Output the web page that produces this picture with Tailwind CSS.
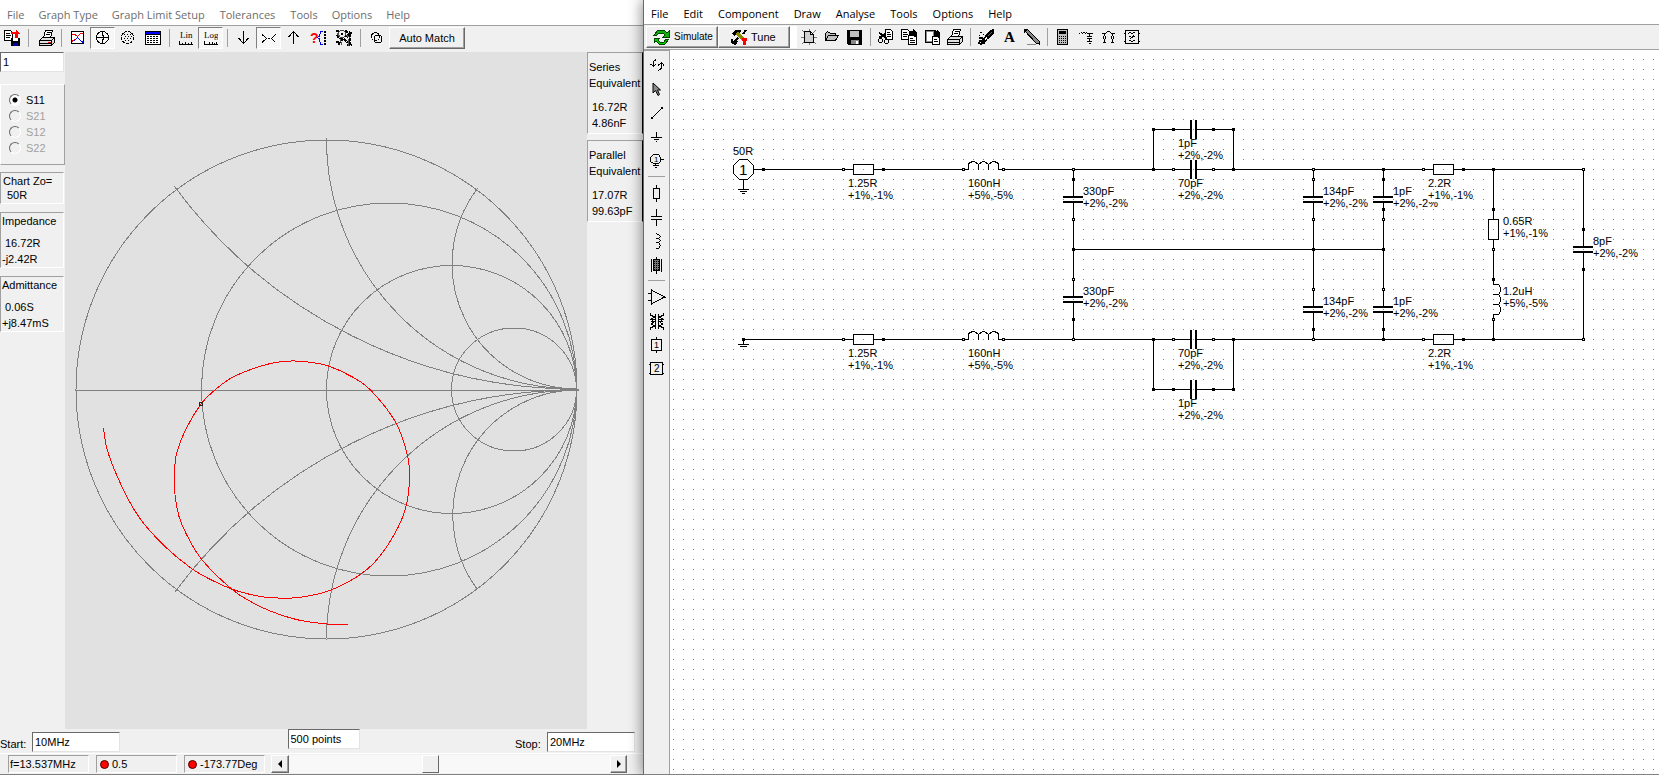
<!DOCTYPE html>
<html lang="en">
<head>
<meta charset="utf-8">
<title>RF circuit simulator</title>
<script src="https://cdn.jsdelivr.net/npm/@tailwindcss/browser@4"></script>
</head>
<body class="flex h-screen overflow-hidden bg-[#f0f0f0] font-['Liberation_Sans',sans-serif] text-[11px] leading-4 text-black">

<!-- Shared schematic symbols -->
<svg class="absolute size-0" aria-hidden="true">
  <defs>
    <pattern id="grid" x="3" y="9" width="10" height="10" patternUnits="userSpaceOnUse"><rect width="1" height="1" fill="#808080"/></pattern>
    <g id="dot"><rect x="-1" y="-1" width="3" height="3"/></g>
    <g id="ring"><rect x="-1" y="-1" width="3" height="3"/><rect width="1" height="1" fill="#fff"/></g>
    <g id="res"><path d="M0 .5H10M31 .5H40" stroke="#000" fill="none"/><rect x="10.5" y="-4.500" width="20" height="10" fill="none" stroke="#000"/><use href="#ring"/><use href="#dot" x="40"/></g>
    <g id="ind"><path d="M0 .5H5.500V-5.500L7.500-6.500L9.500-7.500H11.500L15.500-4.500V.5M15.500-4.500L19.500-7.500H21.500L25.500-4.500V.5M25.500-4.500L29.500-7.500H31.500L35.500-5.500V.5H40" stroke="#000" fill="none"/><use href="#ring"/><use href="#ring" x="40"/></g>
    <g id="capv"><path d="M.5-20V-3M.5 4V21" stroke="#000"/><rect x="-10" y="-3" width="20" height="2"/><rect x="-10" y="2" width="20" height="2"/></g>
    <g id="caph"><path d="M-20 .5H-3M4 .5H21" stroke="#000"/><rect x="-3" y="-9" width="2" height="19"/><rect x="2" y="-9" width="2" height="19"/></g>
    <g id="printer"><path d="M4.500 7.500L6.500 .5H13.500L11.500 7.500" fill="#fff" stroke="#000"/><path d="M.5 10.500L3.500 7.500H15.500V12.500L12.500 15.500H.5Z" fill="#e0e0e0" stroke="#000"/><path d="M1 10.500H12.500V15M12.500 10.500L15.500 8M8 2.500H12M7 4.500H11" fill="none" stroke="#000"/><path d="M1 13.500H12" stroke="#000"/></g>
  </defs>
</svg>

<!-- Graph window -->
<section class="flex w-[643px] shrink-0 flex-col" aria-label="Graph">
  <nav class="flex h-[25px] items-center bg-white pt-1 font-['Open_Sans',sans-serif] text-[11px] text-[#6d6d6d]">
    <button class="px-[7px]">File</button><button class="px-[7px]">Graph Type</button><button class="px-[7px]">Graph Limit Setup</button><button class="px-2">Tolerances</button><button class="px-[7px]">Tools</button><button class="px-[7px]">Options</button><button class="px-[7px]">Help</button>
  </nav>

  <div class="flex h-[27px] items-start border-t border-[#a0a0a0] pt-px">
    <button aria-label="Copy" class="flex h-[22px] w-6 items-center justify-center"><svg class="size-4" shape-rendering="crispEdges"><path d="M.5 .5H6.500L8.500 2.500V10.500H.5ZM2 3.500H6M2 5.500H7M2 7.500H6" fill="#fff" stroke="#000"/><path d="M7 2H12V0L16 4H14V8H11V4H7Z" fill="#f00"/><rect x="7" y="8" width="9" height="8"/><rect x="9" y="8" width="5" height="3" fill="#fff"/><rect x="9" y="13" width="5" height="3" fill="#00a"/></svg></button>
    <span class="flex h-[22px] w-2 items-center justify-center"><i class="h-[18px] w-px bg-[#a0a0a0]"></i></span>
    <button aria-label="Print" class="flex h-[22px] w-[25px] items-center justify-end pr-0.5"><svg class="size-4" shape-rendering="crispEdges"><use href="#printer"/><rect x="9" y="12" width="3" height="1" fill="#f00"/></svg></button>
    <span class="flex h-[22px] w-2 items-center justify-center"><i class="h-[18px] w-px bg-[#a0a0a0]"></i></span>
    <button aria-label="Rectangular graph" class="flex h-[22px] w-[25px] items-center justify-center"><svg class="size-[14px]" shape-rendering="crispEdges"><rect x=".5" y=".5" width="12" height="12" fill="#fff" stroke="#000"/><path d="M1 9.500H3L6.500 6.500L8.500 8.500L12 11.500" fill="none" stroke="#00f"/><path d="M1 3.500H4L6.500 5.500L9.500 2.500H12M1 10.500L4 8" fill="none" stroke="#f00"/></svg></button>
    <button aria-label="Smith chart" aria-pressed="true" class="flex h-[22px] w-[25px] items-center justify-center border border-t-[#808080] border-l-[#808080] border-r-white border-b-white bg-[#f7f7f7]"><svg class="size-[14px]" shape-rendering="crispEdges" fill="none" stroke="#000"><circle cx="6.500" cy="6.500" r="6"/><path d="M0 6.500H13M6.500 1V4L8.500 6.500L6.500 9V13"/></svg></button>
    <button aria-label="Polar chart" class="flex h-[22px] w-[25px] items-center justify-center"><svg class="size-[14px]" shape-rendering="crispEdges" fill="none" stroke="#000"><circle cx="6.500" cy="6.500" r="6" stroke-dasharray="3 1"/><path stroke-dasharray="1 2" d="M3 3.500H11M4 5.500H12M3 7.500H11M4 9.500H10"/></svg></button>
    <button aria-label="Table" class="flex h-[22px] w-[25px] items-center justify-center"><svg class="h-[14px] w-4" shape-rendering="crispEdges"><rect x=".5" y=".5" width="15" height="13" fill="#fff" stroke="#000"/><rect x="1" y="1" width="14" height="2" fill="#00f"/><path d="M1 3.500H15" stroke="#000"/><path d="M2 5.500H14M2 7.500H14M2 9.500H14M2 11.500H14" stroke="#000" stroke-dasharray="2 1"/></svg></button>
    <span class="flex h-[22px] w-2 items-center justify-center"><i class="h-[18px] w-px bg-[#a0a0a0]"></i></span>
    <button aria-label="Linear scale" class="flex h-[22px] w-[25px] items-center justify-center"><svg class="h-4 w-[14px]" shape-rendering="crispEdges"><text x="1" y="8" font-size="9" font-family="Liberation Serif">Lin</text><path d="M0 14.500H14M.5 11V15M3.500 13V15M6.500 12V15M9.500 13V15M12.500 12V15" stroke="#000"/></svg></button>
    <button aria-label="Log scale" aria-pressed="true" class="flex h-[22px] w-[25px] items-center justify-center border border-t-[#808080] border-l-[#808080] border-r-white border-b-white bg-[#f7f7f7]"><svg class="h-4 w-[14px]" shape-rendering="crispEdges"><text x="0" y="8" font-size="9" font-family="Liberation Serif">Log</text><path d="M0 14.500H14M.5 11V15M5.500 12V15M8.500 12V15M10.500 13V15M12.500 12V15" stroke="#000"/></svg></button>
    <span class="flex h-[22px] w-2 items-center justify-center"><i class="h-[18px] w-px bg-[#a0a0a0]"></i></span>
    <button aria-label="Marker down" class="flex h-[22px] w-[25px] items-center justify-center"><svg class="h-[14px] w-3" shape-rendering="crispEdges" fill="none" stroke="#000"><path d="M5.500 0V12M.5 7L5.500 12.500L10.500 7"/></svg></button>
    <button aria-label="Centre" aria-pressed="true" class="flex h-[22px] w-[25px] items-center justify-center border border-t-[#808080] border-l-[#808080] border-r-white border-b-white bg-[#f7f7f7]"><svg class="h-3 w-[14px]" shape-rendering="crispEdges" fill="none" stroke="#000"><path d="M0 2.500L4.500 6.500L0 10.500M13.500 2.500L9.500 6.500L13.500 10.500M6 6.500H8"/></svg></button>
    <button aria-label="Marker up" class="flex h-[22px] w-[25px] items-center justify-center"><svg class="h-[14px] w-3" shape-rendering="crispEdges" fill="none" stroke="#000"><path d="M5.500 13V1M.5 6L5.500 .5L10.500 6"/></svg></button>
    <button aria-label="Query" class="flex h-[22px] w-[25px] items-center justify-center"><svg class="h-4 w-[18px]" shape-rendering="crispEdges"><text x="0" y="13" font-size="14" font-weight="700" fill="#f00">?</text><path d="M12.500 1.500H10.500L9.500 6L7.500 7.500L9.500 9L10.500 14.500H12.500" fill="none" stroke="#00f"/><path d="M15 1V15" stroke="#000" stroke-width="2" stroke-dasharray="2 1"/></svg></button>
    <button aria-label="Tolerance" class="flex h-[22px] w-[25px] items-center justify-center"><svg class="size-4" shape-rendering="crispEdges" fill="none" stroke="#000"><circle cx="6" cy="4" r="3.500" stroke="#444"/><circle cx="6" cy="4" r="1"/><path stroke-width="2" d="M0 1H4M1 5L3 9M0 12H4L2 15M9 1L15 3L10 6L15 9M8 9L11 12L15 11M11 15H16M5 8L7 11M14 4V15" stroke-dasharray="3 1"/><path stroke="#555" d="M1 3L4 7M4 9L6 15M9 4L14 8M12 9V16"/></svg></button>
    <span class="flex h-[22px] w-2 items-center justify-center"><i class="h-[18px] w-px bg-[#a0a0a0]"></i></span>
    <button aria-label="Overlay" class="flex h-[22px] w-[25px] items-center justify-center"><svg class="size-3" shape-rendering="crispEdges" fill="none" stroke="#000"><circle cx="4.500" cy="4.500" r="4"/><circle cx="7" cy="7" r="4"/></svg></button>
    <button class="h-[22px] w-[76px] border border-t-white border-l-white border-r-[#696969] border-b-[#696969] shadow-[inset_-1px_-1px_0_#a0a0a0]">Auto Match</button>
  </div>

  <div class="flex min-h-0 flex-1">
    <aside class="flex w-[65px] shrink-0 flex-col">
      <input aria-label="Graph number" value="1" class="h-5 w-16 border border-t-[#696969] border-l-[#696969] border-r-[#e3e3e3] border-b-[#e3e3e3] bg-white pl-0.5 pb-px">
      <fieldset class="mt-3 h-[81px] border border-t-white border-l-white border-r-[#a0a0a0] border-b-[#a0a0a0] pt-[7px] pl-2">
        <label class="flex h-4 items-center gap-[5px]"><input type="radio" name="s" checked class="size-3 appearance-none rounded-full border border-t-[#696969] border-l-[#696969] border-r-white border-b-white bg-white checked:bg-[radial-gradient(circle,#000_2px,#fff_3px)]">S11</label>
        <label class="flex h-4 items-center gap-[5px] text-[#a0a0a0]"><input type="radio" name="s" disabled class="size-3 appearance-none rounded-full border border-t-[#696969] border-l-[#696969] border-r-white border-b-white">S21</label>
        <label class="flex h-4 items-center gap-[5px] text-[#a0a0a0]"><input type="radio" name="s" disabled class="size-3 appearance-none rounded-full border border-t-[#696969] border-l-[#696969] border-r-white border-b-white">S12</label>
        <label class="flex h-4 items-center gap-[5px] text-[#a0a0a0]"><input type="radio" name="s" disabled class="size-3 appearance-none rounded-full border border-t-[#696969] border-l-[#696969] border-r-white border-b-white">S22</label>
      </fieldset>
      <div class="mt-[7px] h-8 w-16 border border-t-[#a0a0a0] border-l-[#a0a0a0] border-r-white border-b-white pl-0.5 leading-[14px] pt-px">Chart Zo=<p class="pl-1">50R</p></div>
      <div class="mt-2 h-14 w-16 border border-t-[#a0a0a0] border-l-[#a0a0a0] border-r-white border-b-white pl-px">Impedance<p class="mt-1.5 pl-[3px]">16.72R</p><p>-j2.42R</p></div>
      <div class="mt-2 h-14 w-16 border border-t-[#a0a0a0] border-l-[#a0a0a0] border-r-white border-b-white pl-px">Admittance<p class="mt-1.5 pl-[3px]">0.06S</p><p>+j8.47mS</p></div>
    </aside>

    <main class="min-w-0 flex-1 bg-[#e1e1e1]">
      <svg class="size-full" viewBox="65 52 522 676" role="img" aria-label="Smith chart" shape-rendering="crispEdges" fill="none" stroke="#808080">
        <ellipse cx="326.500" cy="389" rx="250.500" ry="249.500"/>
        <ellipse cx="389" cy="389" rx="187.500" ry="186.500"/>
        <ellipse cx="451.500" cy="389" rx="125" ry="124"/>
        <ellipse cx="514" cy="389" rx="62.500" ry="61.500"/>
        <path d="M75 389.500H579M560 388.500H579"/>
        <path d="M326.500 138A250 250 0 0 0 576.500 388.500M326.500 638A250 250 0 0 1 576.500 389.500"/>
        <path d="M477.500 188A125 125 0 0 0 576.500 388.500M477.500 589A125 125 0 0 1 576.500 389.500"/>
        <path d="M174.500 186A500 500 0 0 0 576.500 388.500M174.500 592A500 500 0 0 1 576.500 389.500"/>
        <path id="trace" stroke="#f00"/>
        <rect x="199.500" y="401.500" width="3" height="3" stroke="#222"/>
      </svg>
    </main>

    <aside class="w-14 shrink-0">
      <div class="h-[82px] border border-t-[#a0a0a0] border-l-[#a0a0a0] border-b-white pl-px pt-1.5"><p>Series</p><p>Equivalent</p><p class="mt-2 pl-[3px]">16.72R</p><p class="pl-[3px]">4.86nF</p></div>
      <div class="mt-1.5 h-[82px] border border-t-[#a0a0a0] border-l-[#a0a0a0] border-b-white pl-px pt-1.5"><p>Parallel</p><p>Equivalent</p><p class="mt-2 pl-[3px]">17.07R</p><p class="pl-[3px]">99.63pF</p></div>
    </aside>
  </div>

  <div class="flex h-6 items-start justify-between pr-2">
    <div class="flex pt-[3px]"><label for="start" class="w-8 pt-1">Start:</label><input id="start" value="10MHz" class="h-5 w-[88px] border border-t-[#696969] border-l-[#696969] border-r-[#e3e3e3] border-b-[#e3e3e3] bg-white px-0.5"></div>
    <input aria-label="Points" value="500 points" class="ml-3 h-5 w-[72px] border border-t-[#696969] border-l-[#696969] border-r-[#e3e3e3] border-b-[#e3e3e3] bg-white px-0.5">
    <div class="flex pt-[3px]"><label for="stop" class="w-8 pt-1">Stop:</label><input id="stop" value="20MHz" class="h-5 w-[88px] border border-t-[#696969] border-l-[#696969] border-r-[#e3e3e3] border-b-[#e3e3e3] bg-white px-0.5"></div>
  </div>

  <footer class="flex h-[22px] items-start border-t border-t-white border-b border-b-[#808080] pt-px pl-2 pr-4">
    <output class="h-[18px] w-[81px] border border-t-[#a0a0a0] border-l-[#a0a0a0] border-r-white border-b-white pl-px">f=13.537MHz</output>
    <output class="ml-[7px] flex h-[18px] w-[81px] items-center gap-[3px] border border-t-[#a0a0a0] border-l-[#a0a0a0] border-r-white border-b-white pl-[3px]"><i class="size-[9px] rounded-full border border-[#400] bg-[#f00]"></i>0.5</output>
    <output class="ml-[7px] flex h-[18px] w-[81px] items-center gap-[3px] border border-t-[#a0a0a0] border-l-[#a0a0a0] border-r-white border-b-white pl-[3px]"><i class="size-[9px] rounded-full border border-[#400] bg-[#f00]"></i>-173.77Deg</output>
    <div class="ml-1.5 flex h-[18px] flex-1 bg-[#f8f8f8]">
      <button aria-label="Scroll left" class="flex w-[18px] items-center justify-center border border-t-white border-l-white border-r-[#696969] border-b-[#696969] bg-[#f0f0f0] shadow-[inset_-1px_-1px_0_#a0a0a0]"><svg class="h-2 w-1"><path d="M4 0V8L0 4Z"/></svg></button>
      <input type="range" aria-label="Frequency" min="0" max="1000" value="436" class="h-[18px] min-w-0 flex-1 appearance-none bg-transparent [&::-webkit-slider-thumb]:h-[18px] [&::-webkit-slider-thumb]:w-[17px] [&::-webkit-slider-thumb]:appearance-none [&::-webkit-slider-thumb]:border [&::-webkit-slider-thumb]:border-t-white [&::-webkit-slider-thumb]:border-l-white [&::-webkit-slider-thumb]:border-r-[#696969] [&::-webkit-slider-thumb]:border-b-[#696969] [&::-webkit-slider-thumb]:bg-[#f0f0f0]">
      <button aria-label="Scroll right" class="flex w-[17px] items-center justify-center border border-t-white border-l-white border-r-[#696969] border-b-[#696969] bg-[#f0f0f0] shadow-[inset_-1px_-1px_0_#a0a0a0]"><svg class="h-2 w-1"><path d="M0 0V8L4 4Z"/></svg></button>
    </div>
  </footer>
</section>

<!-- Schematic window -->
<section class="z-10 flex min-w-0 flex-1 flex-col border-l border-[#696969] border-b border-b-[#808080] bg-[#f0f0f0] shadow-[-2px_0_12px_rgba(0,0,0,0.4)]" aria-label="Schematic">
  <nav class="flex h-6 items-center gap-px bg-white pt-[3px] font-['Open_Sans',sans-serif] text-[11px]">
    <button class="px-[7px]">File</button><button class="px-[7px]">Edit</button><button class="px-[7px]">Component</button><button class="px-[7px]">Draw</button><button class="px-[7px]">Analyse</button><button class="px-[7px]">Tools</button><button class="px-[7px]">Options</button><button class="px-[7px]">Help</button>
  </nav>

  <div class="flex h-[26px] items-start border-y border-[#a0a0a0] pt-px pl-0.5">
    <button class="flex h-[22px] w-[72px] items-center gap-1 border border-t-white border-l-white border-r-[#696969] border-b-[#696969] pl-1.5 text-[10px] shadow-[inset_-1px_-1px_0_#a0a0a0]"><svg class="h-4 w-[17px] shrink-0" shape-rendering="crispEdges"><path d="M1 6L5 1H11L14 4L16 2V8H10L12 6L10 4H6L4 6Z" fill="#1a1" stroke="#040"/><path d="M16 10L12 15H6L3 12L1 14V9H7L5 11L7 13H11L13 10Z" fill="#0c0" stroke="#040"/></svg>Simulate</button>
    <button class="flex h-[22px] w-[72px] items-center gap-1 border border-t-white border-l-white border-r-[#696969] border-b-[#696969] pl-3 shadow-[inset_-1px_-1px_0_#a0a0a0]"><svg class="size-4 shrink-0" shape-rendering="crispEdges"><path d="M1 4L4 1H10L9 5H5L3 7Z"/><path d="M6 4L13 11" stroke="#880" stroke-width="3"/><path d="M15 1L12 5M2 14L7 9M1 10V13L4 15L6 12" fill="none" stroke="#000" stroke-width="2"/><path d="M11 10H16M13.500 10V16" stroke="#f00" stroke-width="3"/></svg>Tune</button>
    <span class="h-[22px] w-[7px] bg-white"></span>
    <button aria-label="New" class="flex h-[22px] w-[23px] items-center justify-center"><svg class="size-4" shape-rendering="crispEdges"><path d="M1 1L4 4M15 1L12 4M1 15L4 12M15 15L12 12M0 8H3M13 8H16M8 0V2M8 14V16" stroke="#777"/><path d="M3.500 2.500H9.500L12.500 5.500V13.500H3.500ZM9.500 3V5.500H12" fill="#d0d0d0" stroke="#000"/></svg></button>
    <button aria-label="Open" class="flex h-[22px] w-[23px] items-center justify-center"><svg class="h-3 w-[14px]" shape-rendering="crispEdges"><path d="M.5 9.500V2.500L2.500 .5L5.500 2.500H10.500V4.500H13.500L10.500 9.500ZM.5 9.500L3.500 4.500H10" fill="#c0c0c0" stroke="#000"/></svg></button>
    <button aria-label="Save" class="flex h-[22px] w-[23px] items-center justify-center"><svg class="size-[15px]" shape-rendering="crispEdges"><path d="M0 0H15V15H1L0 14Z"/><rect x="3" y="1" width="9" height="6" fill="#c0c0c0"/><rect x="4" y="10" width="8" height="4" fill="#888"/><rect x="9" y="11" width="2" height="3" fill="#fff"/></svg></button>
    <span class="flex h-[22px] w-2 items-center justify-center"><i class="h-[18px] w-px bg-[#a0a0a0]"></i></span>
    <button aria-label="Cut" class="flex h-[22px] w-[23px] items-center justify-center"><svg class="size-4" shape-rendering="crispEdges"><path d="M7.500 .5H12.500L14.500 2.500V10.500H7.500ZM9 3.500H12M9 5.500H13M9 7.500H13" fill="#fff" stroke="#000"/><path d="M1 4L9 9M1 9L7 5" stroke="#000" stroke-width="2"/><circle cx="2.500" cy="11.500" r="2" fill="none" stroke="#000"/><circle cx="8.500" cy="12.500" r="2" fill="none" stroke="#000"/></svg></button>
    <button aria-label="Copy schematic" class="flex h-[22px] w-[23px] items-center justify-center"><svg class="size-4" shape-rendering="crispEdges"><path d="M.5 .5H6.500L8.500 2.500V10.500H.5ZM2 3.500H6M2 5.500H7M2 7.500H6" fill="#fff" stroke="#000"/><path d="M8 2H12V0L16 4V8H8Z"/><path d="M7.500 6.500H12.500L15.500 8.500V15.500H7.500ZM9 9.500H12M9 11.500H14M9 13.500H14" fill="#fff" stroke="#000"/></svg></button>
    <button aria-label="Paste" class="flex h-[22px] w-[23px] items-center justify-center"><svg class="size-4" shape-rendering="crispEdges"><rect x="1" y="1" width="10" height="12" fill="#888" stroke="#000"/><rect x="3" y="3" width="6" height="9" fill="#fff"/><path d="M10 2H13V0L16 4V9H10Z"/><path d="M8.500 7.500H13.500L15.500 9.500V15.500H8.500ZM10 10.500H13M10 12.500H14" fill="#fff" stroke="#000"/></svg></button>
    <button aria-label="Print schematic" class="flex h-[22px] w-[23px] items-center justify-center"><svg class="size-4" shape-rendering="crispEdges"><use href="#printer"/></svg></button>
    <span class="flex h-[22px] w-2 items-center justify-center"><i class="h-[18px] w-px bg-[#a0a0a0]"></i></span>
    <button aria-label="Clear" class="flex h-[22px] w-[23px] items-center justify-center"><svg class="size-4" shape-rendering="crispEdges"><path d="M8 7L13 2L15 1V4L10 9Z" fill="#666" stroke="#000" stroke-width="2"/><path d="M8 7L10 9L7 13H4Z" fill="#fff" stroke="#000"/><path d="M1 9H4L6 11V15M6 12H2L1 14L3 15L6 13" fill="none" stroke="#000" stroke-width="2"/><path d="M2 3.500H4M5 5.500H6M1 6.500H2" stroke="#000"/></svg></button>
    <button aria-label="Text" class="flex h-[22px] w-[23px] items-center justify-center pl-0.5 font-['Liberation_Serif',serif] text-[15px] font-bold">A</button>
    <button aria-label="Draw line" class="flex h-[22px] w-[23px] items-center justify-center"><svg class="size-4" shape-rendering="crispEdges"><path d="M0 1L3 0L15 12V15L12 14Z" fill="#888" stroke="#000"/><path d="M0 0H4L0 4Z"/><path d="M3 15.500H12" stroke="#888"/></svg></button>
    <span class="flex h-[22px] w-2 items-center justify-center"><i class="h-[18px] w-px bg-[#a0a0a0]"></i></span>
    <button aria-label="Calculator" class="flex h-[22px] w-[23px] items-center justify-center"><svg class="h-4 w-3" shape-rendering="crispEdges"><rect x=".5" y=".5" width="10" height="15" fill="#c0c0c0" stroke="#000"/><rect x="2" y="2" width="7" height="3"/><path d="M2 7.500H9M2 9.500H9M2 11.500H9M2 13.500H9" stroke="#000" stroke-dasharray="1 1"/></svg></button>
    <button aria-label="L match" class="flex h-[22px] w-[23px] items-center justify-center"><svg class="size-[14px]" shape-rendering="crispEdges" fill="none" stroke="#000"><path d="M0 3.500H1M2 2.500H3M3 3.500H4M4 2.500H6M6 3.500H7M7 2.500H8M8 3.500H14M10.500 3V6M8 6.500H13M8 8.500H13M10.500 9V12M8 11.500H13M10 13.500H12"/></svg></button>
    <button aria-label="Pi match" class="flex h-[22px] w-[23px] items-center justify-center"><svg class="size-[14px]" shape-rendering="crispEdges" fill="none" stroke="#000"><path d="M0 3.500H4M4 2.500H5M5 1.500H8M8 2.500H9M9 3.500H13M2.500 4V6M1.500 6V9M3.500 6V9M2.500 9V12M10.500 4V6M9.500 6V9M11.500 6V9M10.500 9V12M1 12.500H4M9 12.500H12"/></svg></button>
    <button aria-label="Filter" class="flex h-[22px] w-[23px] items-center justify-center"><svg class="h-[14px] w-4" shape-rendering="crispEdges" fill="none" stroke="#000"><rect x="1.500" y=".5" width="13" height="13"/><path d="M0 3.500H1M15 3.500H16M0 11.500H1M15 11.500H16M4 3.500H5M5 2.500H7M7 3.500H9M9 2.500H11M5 6.500H7M7 7.500H9M9 6.500H11M5 10.500H7M7 11.500H9M9 10.500H11M6 9L10 5"/></svg></button>
  </div>

  <div class="flex min-h-0 flex-1">
    <div class="flex w-[26px] shrink-0 flex-col items-stretch border-t border-r border-[#a0a0a0] pt-0.5">
      <button aria-label="Rotate" class="flex h-6 items-center justify-center"><svg class="h-4 w-[14px]" shape-rendering="crispEdges" fill="none" stroke="#000"><path d="M6 2.500L3.500 4.500V9M.5 7L3.500 9.500L6 7M8 13.500L11.500 11.500V6M8 8.500L11.500 5.500L14 8.500"/></svg></button>
      <button aria-label="Select" class="flex h-6 items-center justify-center"><svg class="h-[15px] w-2.5"><path d="M1 1V11L3.500 8.500L6 13.500L7.500 12.500L5.500 8H8.500Z" fill="#888" stroke="#000"/></svg></button>
      <button aria-label="Wire" class="flex h-6 items-center justify-center"><svg class="size-3" shape-rendering="crispEdges"><path d="M1 11L11 1" stroke="#000"/><rect x="0" y="10" width="2" height="2"/><rect x="10" y="0" width="2" height="2"/></svg></button>
      <button aria-label="Ground" class="flex h-6 items-center justify-center"><svg class="size-3" shape-rendering="crispEdges"><path d="M5.500 1V6M0 6.500H11M3 8.500H8M5 10.500H6" stroke="#000"/></svg></button>
      <button aria-label="Port" class="flex h-6 items-center justify-center"><svg class="h-[15px] w-[14px]" shape-rendering="crispEdges"><path d="M3.500 .5H8.500L10.500 3.500V7.500L8.500 9.500H3.500L.5 7.500V3.500ZM11 5.500H14M5.500 10V12M3 11.500H9M5 13.500H7" fill="none" stroke="#000"/><text x="4" y="8" font-size="8">1</text></svg></button>
      <span class="mx-1 my-[3px] h-0.5 border-t border-[#a0a0a0]"></span>
      <button aria-label="Resistor" class="flex h-6 items-center justify-center"><svg class="h-[17px] w-[7px]" shape-rendering="crispEdges" fill="none" stroke="#000"><path d="M3.500 0V3M3.500 14V17"/><rect x=".5" y="3.500" width="6" height="10"/></svg></button>
      <button aria-label="Capacitor" class="flex h-6 items-center justify-center"><svg class="h-[17px] w-[11px]" shape-rendering="crispEdges" stroke="#000"><path d="M5.500 0V7M0 7.500H11M0 10.500H11M5.500 11V17"/></svg></button>
      <button aria-label="Inductor" class="flex h-6 items-center justify-center"><svg class="ml-1 h-[17px] w-[5px]" shape-rendering="crispEdges" fill="none" stroke="#000"><path d="M0 .5L2.500 1.500L4.500 3.500L2.500 5.500H0H2.500L4.500 7.500L2.500 9.500H0H2.500L4.500 12.500L2.500 15.500H0"/></svg></button>
      <button aria-label="Transmission line" class="flex h-6 items-center justify-center"><svg class="h-[17px] w-[11px]" shape-rendering="crispEdges" stroke="#000"><path d="M.5 2V15M10.500 2V15M5.500 0V17"/><rect x="2.500" y="2.500" width="6" height="11" fill="#777"/><path d="M3 4.500H9M3 6.500H9M3 8.500H9M3 10.500H9M3 12.500H9" stroke-dasharray="1 1"/></svg></button>
      <span class="mx-1 my-[3px] h-0.5 border-t border-[#a0a0a0]"></span>
      <button aria-label="Amplifier" class="flex h-6 items-center justify-center"><svg class="h-4 w-[18px]" shape-rendering="crispEdges" fill="none" stroke="#000"><path d="M3.500 1V15L16.500 8ZM0 4.500H3M0 11.500H3M16 8.500H18"/></svg></button>
      <button aria-label="Transformer" class="flex h-6 items-center justify-center"><svg class="h-[17px] w-[14px]" shape-rendering="crispEdges" fill="none" stroke="#000"><path d="M5.500 1V16M8.500 1V16M.5 0V2L4.500 4L1.500 6H4.500L1.500 8.500H4.500L1.500 11L4.500 13L.5 15V17M13.500 0V2L9.500 4L12.500 6H9.500L12.500 8.500H9.500L12.500 11L9.500 13L13.500 15V17"/></svg></button>
      <button aria-label="One port block" class="flex h-6 items-center justify-center"><svg class="h-4 w-[11px]" shape-rendering="crispEdges"><path d="M.5 2.500H10.500V13.500H.5ZM5.500 0V3M5.500 13V16" fill="none" stroke="#000"/><text x="3" y="11" font-size="9">1</text></svg></button>
      <button aria-label="Two port block" class="flex h-6 items-center justify-center"><svg class="h-[14px] w-[15px]" shape-rendering="crispEdges"><path d="M1.500 .5H13.500V12.500H1.500ZM0 2.500H1M14 2.500H15M0 11.500H1M14 11.500H15" fill="none" stroke="#000"/><text x="5" y="10" font-size="10">2</text></svg></button>
    </div>

    <svg class="min-w-0 flex-1 bg-white" role="img" aria-label="Circuit schematic" shape-rendering="crispEdges">
      <g transform="translate(-670 -50)">
        <rect x="669" y="52" width="3000" height="2000" fill="url(#grid)"/>
        <!-- Wires -->
        <path fill="none" stroke="#000" d="M754 169.500H843M883 169.500H963M1003 169.500H1173M1213 169.500H1423M1463 169.500H1583.500V230M743 339.500H843M883 339.500H963M1003 339.500H1173M1213 339.500H1423M1463 339.500H1583.500V269M1153.500 169V129.500H1173M1213 129.500H1233.500V169M1153.500 339V389.500H1173M1213 389.500H1233.500V339M1073.500 169V180M1073.500 219V280M1073.500 319V339M1313.500 169V180M1313.500 219V290M1313.500 329V339M1383.500 169V180M1383.500 219V290M1383.500 329V339M1073 249.500H1383M1493.500 169V219M1493.500 240V284.500M1493.500 314V339"/>
        <!-- Source and grounds -->
        <path fill="#fff" stroke="#000" d="M739.500 159.500H747.500L753.500 165.500V173.500L747.500 179.500H739.500L733.500 173.500V165.500Z"/>
        <path fill="none" stroke="#000" d="M743.500 180V189M738 189.500H749M740 191.500H747M742 193.500H745M743.500 339V344M738 344.500H749M740 346.500H747"/>
        <!-- Parts -->
        <use href="#res" x="843" y="169"/><use href="#res" x="843" y="339"/><use href="#res" x="1423" y="169"/><use href="#res" x="1423" y="339"/>
        <use href="#ind" x="963" y="169"/><use href="#ind" x="963" y="339"/>
        <use href="#caph" x="1193" y="129"/><use href="#caph" x="1193" y="169"/><use href="#caph" x="1193" y="339"/><use href="#caph" x="1193" y="389"/>
        <use href="#capv" x="1073" y="199"/><use href="#capv" x="1073" y="299"/><use href="#capv" x="1313" y="199"/><use href="#capv" x="1313" y="309"/><use href="#capv" x="1383" y="199"/><use href="#capv" x="1383" y="309"/><use href="#capv" x="1583" y="249"/>
        <rect x="1488.500" y="219.500" width="10" height="20" fill="none" stroke="#000"/>
        <path fill="none" stroke="#000" d="M1493.500 284.500H1498.500L1500.500 287.500V291.500L1498.500 294.500H1493M1498.500 294.500L1500.500 297.500V301.500L1498.500 304.500H1493M1498.500 304.500L1500.500 307.500V311.500L1498.500 314.500H1493.500"/>
        <!-- Terminals -->
        <use href="#dot" x="763" y="169"/><use href="#dot" x="743" y="339"/><use href="#dot" x="1153" y="169"/><use href="#dot" x="1233" y="169"/><use href="#dot" x="1153" y="129"/><use href="#dot" x="1173" y="129"/><use href="#dot" x="1213" y="129"/><use href="#dot" x="1233" y="129"/><use href="#ring" x="1173" y="169"/><use href="#ring" x="1213" y="169"/>
        <use href="#dot" x="1153" y="339"/><use href="#dot" x="1233" y="339"/><use href="#ring" x="1173" y="339"/><use href="#ring" x="1213" y="339"/><use href="#dot" x="1153" y="389"/><use href="#dot" x="1173" y="389"/><use href="#dot" x="1213" y="389"/><use href="#dot" x="1233" y="389"/>
        <use href="#ring" x="1073" y="169"/><use href="#dot" x="1073" y="179"/><use href="#ring" x="1073" y="219"/><use href="#dot" x="1073" y="249"/><use href="#ring" x="1073" y="279"/><use href="#dot" x="1073" y="319"/><use href="#ring" x="1073" y="339"/>
        <use href="#ring" x="1313" y="169"/><use href="#ring" x="1313" y="179"/><use href="#ring" x="1313" y="219"/><use href="#dot" x="1313" y="249"/><use href="#ring" x="1313" y="289"/><use href="#dot" x="1313" y="329"/><use href="#ring" x="1313" y="339"/>
        <use href="#dot" x="1383" y="169"/><use href="#dot" x="1383" y="179"/><use href="#dot" x="1383" y="209"/><use href="#ring" x="1383" y="219"/><use href="#dot" x="1383" y="249"/><use href="#ring" x="1383" y="289"/><use href="#dot" x="1383" y="329"/><use href="#dot" x="1383" y="339"/>
        <use href="#dot" x="1493" y="169"/><use href="#dot" x="1493" y="209"/><use href="#ring" x="1493" y="249"/><use href="#dot" x="1493" y="279"/><use href="#ring" x="1493" y="319"/><use href="#dot" x="1493" y="339"/>
        <use href="#ring" x="1583" y="169"/><use href="#dot" x="1583" y="229"/><use href="#dot" x="1583" y="269"/><use href="#ring" x="1583" y="339"/>
        <!-- Values -->
        <g font-size="11">
          <text x="733" y="155">50R</text><text x="739" y="175" font-size="15">1</text>
          <text x="848" y="187">1.25R<tspan x="848" dy="12">+1%,-1%</tspan></text>
          <text x="848" y="357">1.25R<tspan x="848" dy="12">+1%,-1%</tspan></text>
          <text x="968" y="187">160nH<tspan x="968" dy="12">+5%,-5%</tspan></text>
          <text x="968" y="357">160nH<tspan x="968" dy="12">+5%,-5%</tspan></text>
          <text x="1083" y="195">330pF<tspan x="1083" dy="12">+2%,-2%</tspan></text>
          <text x="1083" y="295">330pF<tspan x="1083" dy="12">+2%,-2%</tspan></text>
          <text x="1178" y="147">1pF<tspan x="1178" dy="12">+2%,-2%</tspan></text>
          <text x="1178" y="187">70pF<tspan x="1178" dy="12">+2%,-2%</tspan></text>
          <text x="1178" y="357">70pF<tspan x="1178" dy="12">+2%,-2%</tspan></text>
          <text x="1178" y="407">1pF<tspan x="1178" dy="12">+2%,-2%</tspan></text>
          <text x="1323" y="195">134pF<tspan x="1323" dy="12">+2%,-2%</tspan></text>
          <text x="1323" y="305">134pF<tspan x="1323" dy="12">+2%,-2%</tspan></text>
          <text x="1393" y="195">1pF<tspan x="1393" dy="12">+2%,-2%</tspan></text>
          <text x="1393" y="305">1pF<tspan x="1393" dy="12">+2%,-2%</tspan></text>
          <rect x="1428" y="190" width="45" height="12" fill="#fff"/>
          <text x="1428" y="187">2.2R<tspan x="1428" dy="12">+1%,-1%</tspan></text>
          <text x="1428" y="357">2.2R<tspan x="1428" dy="12">+1%,-1%</tspan></text>
          <text x="1503" y="225">0.65R<tspan x="1503" dy="12">+1%,-1%</tspan></text>
          <text x="1503" y="295">1.2uH<tspan x="1503" dy="12">+5%,-5%</tspan></text>
          <text x="1593" y="245">8pF<tspan x="1593" dy="12">+2%,-2%</tspan></text>
        </g>
      </g>
    </svg>
  </div>
</section>

<script>
  const p = [[103.5,428],[108.500,453.500],[125.500,493.500],[141.500,520],[165,546],[191.500,568],[211.500,579.500],[231.500,588.500],[248.500,593.500],[268.500,597],[298.500,597],[331,589.500],[361,573.500],[380,555.500],[398,527],[406.500,504],[409.500,480],[407.500,455],[395.500,421.500],[370,389],[351.500,376],[328.500,365.500],[311.500,362],[291.500,360.500],[268.500,363.500],[235,375.500],[215.500,389],[201.500,403],[186.500,427.500],[176.500,453.500],[174.500,475],[175.500,498],[181.500,523],[201,558],[231.500,588.500],[251.500,601.500],[271.500,611],[298.500,619.500],[326.500,623.500],[348,624.500]];
  let d = `M${p[0]}`;
  for (let i = 0; i < p.length - 1; i++) {
    const a = p[i - 1] || p[i], b = p[i], c = p[i + 1], e = p[i + 2] || c;
    d += `C${b[0] + (c[0] - a[0]) / 6} ${b[1] + (c[1] - a[1]) / 6} ${c[0] - (e[0] - b[0]) / 6} ${c[1] - (e[1] - b[1]) / 6} ${c[0]} ${c[1]}`;
  }
  document.getElementById('trace').setAttribute('d', d);
</script>
</body>
</html>
